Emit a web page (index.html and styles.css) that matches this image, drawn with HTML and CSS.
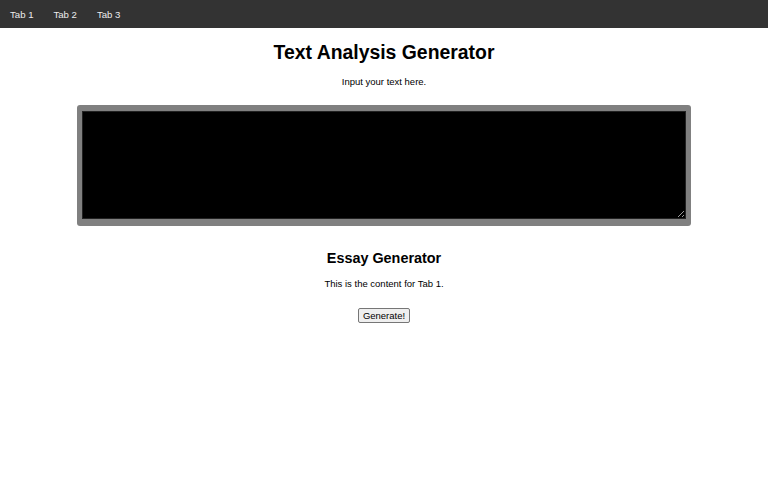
FILE: index.html
```html
<!DOCTYPE html>
<html>
<head>
<meta charset="utf-8">
<link rel="stylesheet" href="styles.css">
</head>
<body>
<nav class="tabs">
  <a class="tab">Tab 1</a>
  <a class="tab">Tab 2</a>
  <a class="tab">Tab 3</a>
</nav>
<main class="content">
  <h1 class="title">Text Analysis Generator</h1>
  <p class="hint">Input your text here.</p>
  <div class="input-frame">
    <textarea class="input"></textarea>
  </div>
  <h2 class="subtitle">Essay Generator</h2>
  <p class="hint">This is the content for Tab 1.</p>
  <button class="generate">Generate!</button>
</main>
</body>
</html>
```

FILE: styles.css
```css
html, body {
  margin: 0;
  padding: 0;
  background: #fff;
  font-family: "Liberation Sans", Arial, sans-serif;
}
.tabs {
  display: flex;
  height: 28px;
  align-items: center;
  background: #333333;
}
.tab {
  padding: 0 10px;
  color: #ececec;
  font-size: 9.6px;
}
.content {
  display: flex;
  flex-direction: column;
  align-items: center;
  color: #000;
}
.title {
  margin: 12px 0 0;
  font-size: 19.4px;
  line-height: 24px;
  font-weight: bold;
}
.hint {
  margin: 0;
  font-size: 9.5px;
  line-height: 12px;
}
.content > .hint:first-of-type {
  margin-top: 12px;
}
.input-frame {
  margin-top: 17px;
  width: 604px;
  padding: 6px 5px 7px 5px;
  background: #808080;
  border-radius: 3px;
}
.input {
  display: block;
  box-sizing: border-box;
  width: 604px;
  height: 108px;
  margin: 0;
  border: 1px solid #222;
  background: #000;
  color: #fff;
  resize: both;
}
.subtitle {
  margin: 23px 0 0;
  font-size: 14.4px;
  line-height: 18px;
  font-weight: bold;
}
.subtitle + .hint {
  margin-top: 11px;
}
.generate {
  margin-top: 18px;
  font-family: "Liberation Sans", Arial, sans-serif;
  font-size: 9.5px;
  padding: 1px 4px;
  border: 1px solid #767676;
  border-radius: 2px;
  background: #efefef;
  color: #000;
}
```
